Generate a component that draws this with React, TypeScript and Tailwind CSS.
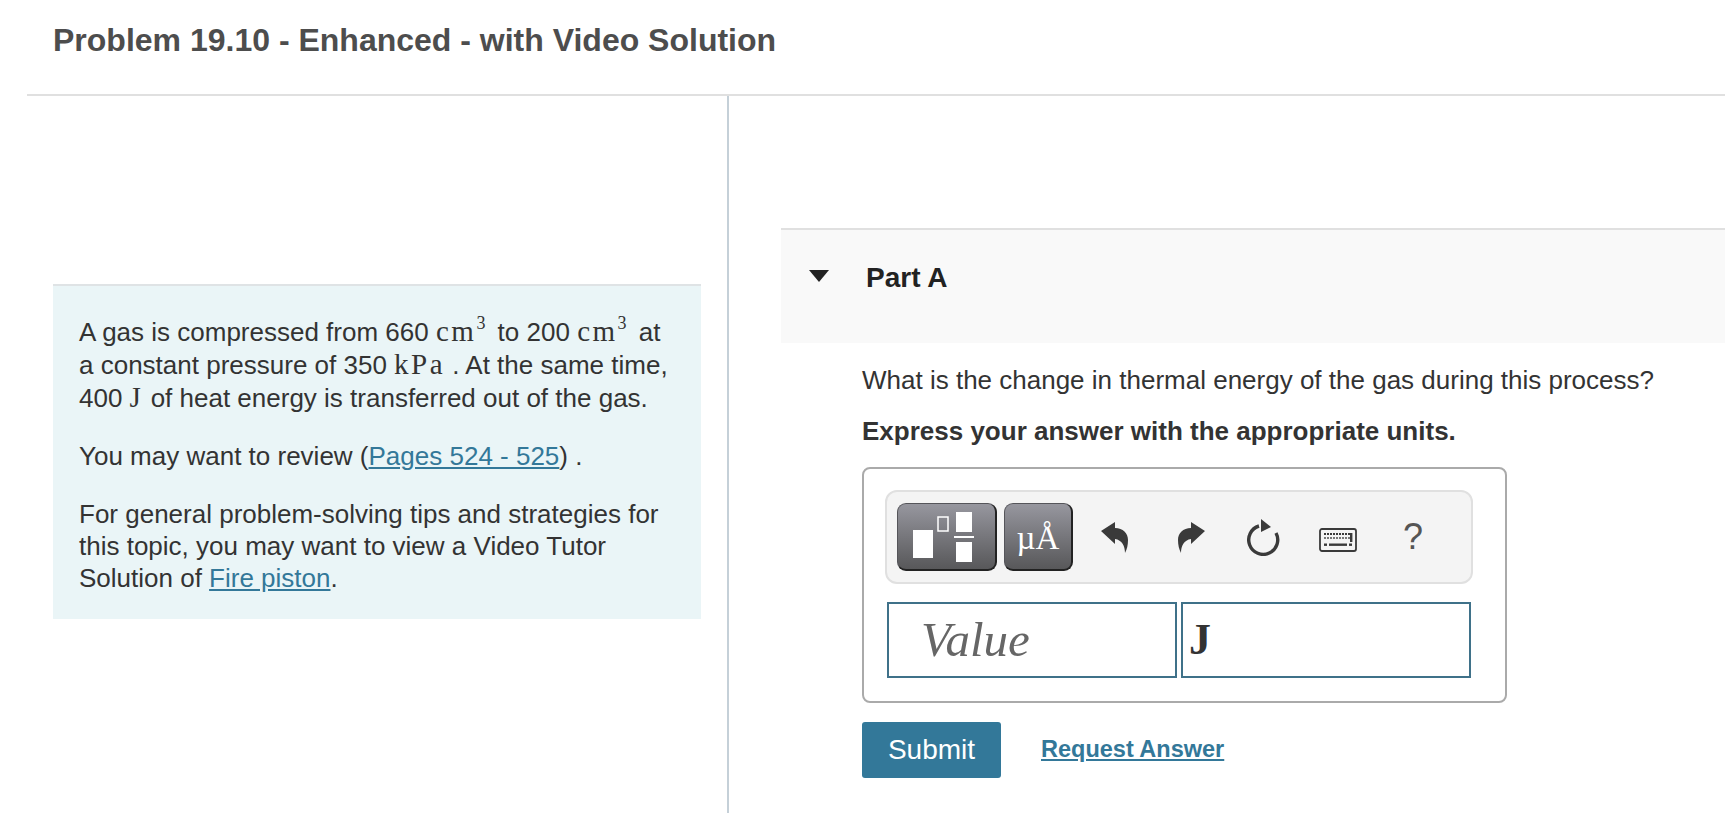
import React from 'react'

function Mathy({ children }: { children: React.ReactNode }) {
  return <span className="font-['Liberation_Serif',serif] text-[29px] tracking-[2.5px] text-[#333]">{children}</span>
}

function Cube() {
  return <span className="relative -top-[12px] mr-[5px] font-['Liberation_Serif',serif] text-[18px] leading-none">3</span>
}

function UndoIcon({ flip }: { flip?: boolean }) {
  return (
    <svg width="27" height="31" viewBox="0 0 27 31" className={flip ? '-scale-x-100' : ''}>
      <path d="M0 9 L14 0 L14 6 C22 6 27 11 27 18 C27 23 26 27 24 31 C24 24 21 18 14 17 L14 22 Z" fill="#3a3a3a" />
    </svg>
  )
}

function ResetIcon() {
  return (
    <svg width="34" height="37" viewBox="0 0 34 37">
      <path d="M12 7 A14.5 14.5 0 1 0 29 14" fill="none" stroke="#3a3a3a" strokeWidth="3.4" />
      <path d="M14 0 L24 8 L14 13 Z" fill="#3a3a3a" />
    </svg>
  )
}

function KeyboardIcon() {
  const top = [5, 8, 11, 14, 17, 20, 23, 26, 29]
  return (
    <svg width="38" height="24" viewBox="0 0 38 24">
      <rect x="1" y="1" width="36" height="22" rx="2" fill="none" stroke="#3a3a3a" strokeWidth="1.8" />
      {top.map((x) => (
        <rect key={x} x={x} y="5" width="2" height="2" fill="#3a3a3a" />
      ))}
      {top.map((x) => (
        <rect key={x} x={x} y="9" width="2" height="2" fill="#777" />
      ))}
      <rect x="31" y="5" width="2.4" height="9" fill="#3a3a3a" />
      <rect x="5" y="15.5" width="3" height="2.4" fill="#3a3a3a" />
      <rect x="10" y="15.5" width="18" height="2.4" fill="#3a3a3a" />
      <rect x="30" y="15.5" width="3" height="2.4" fill="#3a3a3a" />
    </svg>
  )
}

export default function App() {
  return (
    <div className="h-[813px] overflow-hidden bg-white font-['Liberation_Sans',sans-serif] text-[#333]">
      <div className="ml-[27px] flex h-[96px] items-start border-b-2 border-[#e0e0e0] pl-[26px] pt-[18px]">
        <h1 className="text-[32px] font-bold leading-[44px] text-[#4d4d4d]">Problem 19.10 - Enhanced - with Video Solution</h1>
      </div>

      <div className="flex">
        <div className="ml-[27px] h-[717px] w-[702px] border-r-2 border-[#c5d0d8] pl-[26px] pt-[188px]">
          <div className="w-[648px] border-t-2 border-[#dfe3e5] bg-[#eaf5f7] px-[26px] pb-[25px] pt-[29px] text-[26px] leading-[32px]">
            <p>
              A gas is compressed from 660 <Mathy>cm</Mathy><Cube /> to 200 <Mathy>cm</Mathy><Cube /> at a constant pressure of 350 <Mathy>kPa</Mathy> . At the same time, 400 <Mathy>J</Mathy> of heat energy is transferred out of the gas.
            </p>
            <p className="mt-[26px]">
              You may want to review (<a className="text-[#337899] underline">Pages 524 - 525</a>) .
            </p>
            <p className="mt-[26px]">
              For general problem-solving tips and strategies for this topic, you may want to view a Video Tutor Solution of <a className="text-[#337899] underline">Fire piston</a>.
            </p>
          </div>
        </div>

        <div className="flex-1 pl-[52px] pt-[132px]">
          <div className="flex h-[115px] items-start border-t-2 border-[#e0e0e0] bg-[#f9f9f9] pt-[30px]">
            <svg width="22" height="14" viewBox="0 0 22 14" className="ml-[27px] mt-[9px]">
              <path d="M1 1 L21 1 L11 13 Z" fill="#222" />
            </svg>
            <span className="ml-[36px] text-[28px] font-bold leading-[36px] text-[#222]">Part A</span>
          </div>

          <div className="pl-[81px]">
            <p className="mt-[21px] text-[26px] leading-[32px]">What is the change in thermal energy of the gas during this process?</p>
            <p className="mt-[19px] text-[26px] font-bold leading-[32px]">Express your answer with the appropriate units.</p>

            <div className="mt-[20px] h-[236px] w-[645px] rounded-[8px] border-2 border-[#aaaaaa] pl-[21px] pt-[21px]">
              <div className="flex h-[94px] w-[588px] items-center rounded-[12px] border-2 border-[#e0e0e0] bg-[#f4f4f4] pl-[10px]">
                <div className="flex h-[68px] w-[100px] items-center justify-center rounded-[9px] border border-r-2 border-b-2 border-[#55555a] border-r-[#222] border-b-[#222] bg-gradient-to-b from-[#97979f] to-[#58585a]">
                  <svg width="64" height="50" viewBox="0 0 64 50" className="-ml-[4px]">
                    <rect x="0" y="18" width="20" height="28" fill="#fff" />
                    <rect x="25" y="5" width="10" height="14" fill="none" stroke="#fff" strokeWidth="1.5" />
                    <rect x="43" y="0" width="16" height="20" fill="#fff" />
                    <rect x="41" y="24" width="20" height="2" fill="#fff" />
                    <rect x="43" y="30" width="16" height="20" fill="#fff" />
                  </svg>
                </div>
                <div className="ml-[7px] flex h-[68px] w-[69px] items-center justify-center rounded-[9px] border border-r-2 border-b-2 border-[#55555a] border-r-[#222] border-b-[#222] bg-gradient-to-b from-[#97979f] to-[#58585a] pt-[4px] font-['Liberation_Serif',serif] text-[33px] text-white">
                  µÅ
                </div>
                <div className="ml-[28px] flex">
                  <UndoIcon />
                </div>
                <div className="ml-[50px] flex">
                  <UndoIcon flip />
                </div>
                <div className="ml-[42px] flex">
                  <ResetIcon />
                </div>
                <div className="ml-[38px] mt-[6px] flex">
                  <KeyboardIcon />
                </div>
                <span className="ml-[46px] text-[36px] leading-none text-[#555]">?</span>
              </div>

              <div className="mt-[18px] flex gap-[4px] pl-[2px]">
                <div className="flex h-[76px] w-[290px] items-center border-2 border-[#3f7189] pl-[32px] font-['Liberation_Serif',serif] text-[49px] italic text-[#666]">
                  Value
                </div>
                <div className="flex h-[76px] w-[290px] items-center border-2 border-[#3f7189] pl-[6px] font-['Liberation_Serif',serif] text-[44px] font-bold text-[#333]">
                  J
                </div>
              </div>
            </div>

            <div className="mt-[19px] flex items-center">
              <button className="h-[56px] w-[139px] rounded-[3px] bg-[#337899] text-[28px] text-white">Submit</button>
              <a className="ml-[40px] text-[23.5px] font-bold text-[#337899] underline">Request Answer</a>
            </div>
          </div>
        </div>
      </div>
    </div>
  )
}
